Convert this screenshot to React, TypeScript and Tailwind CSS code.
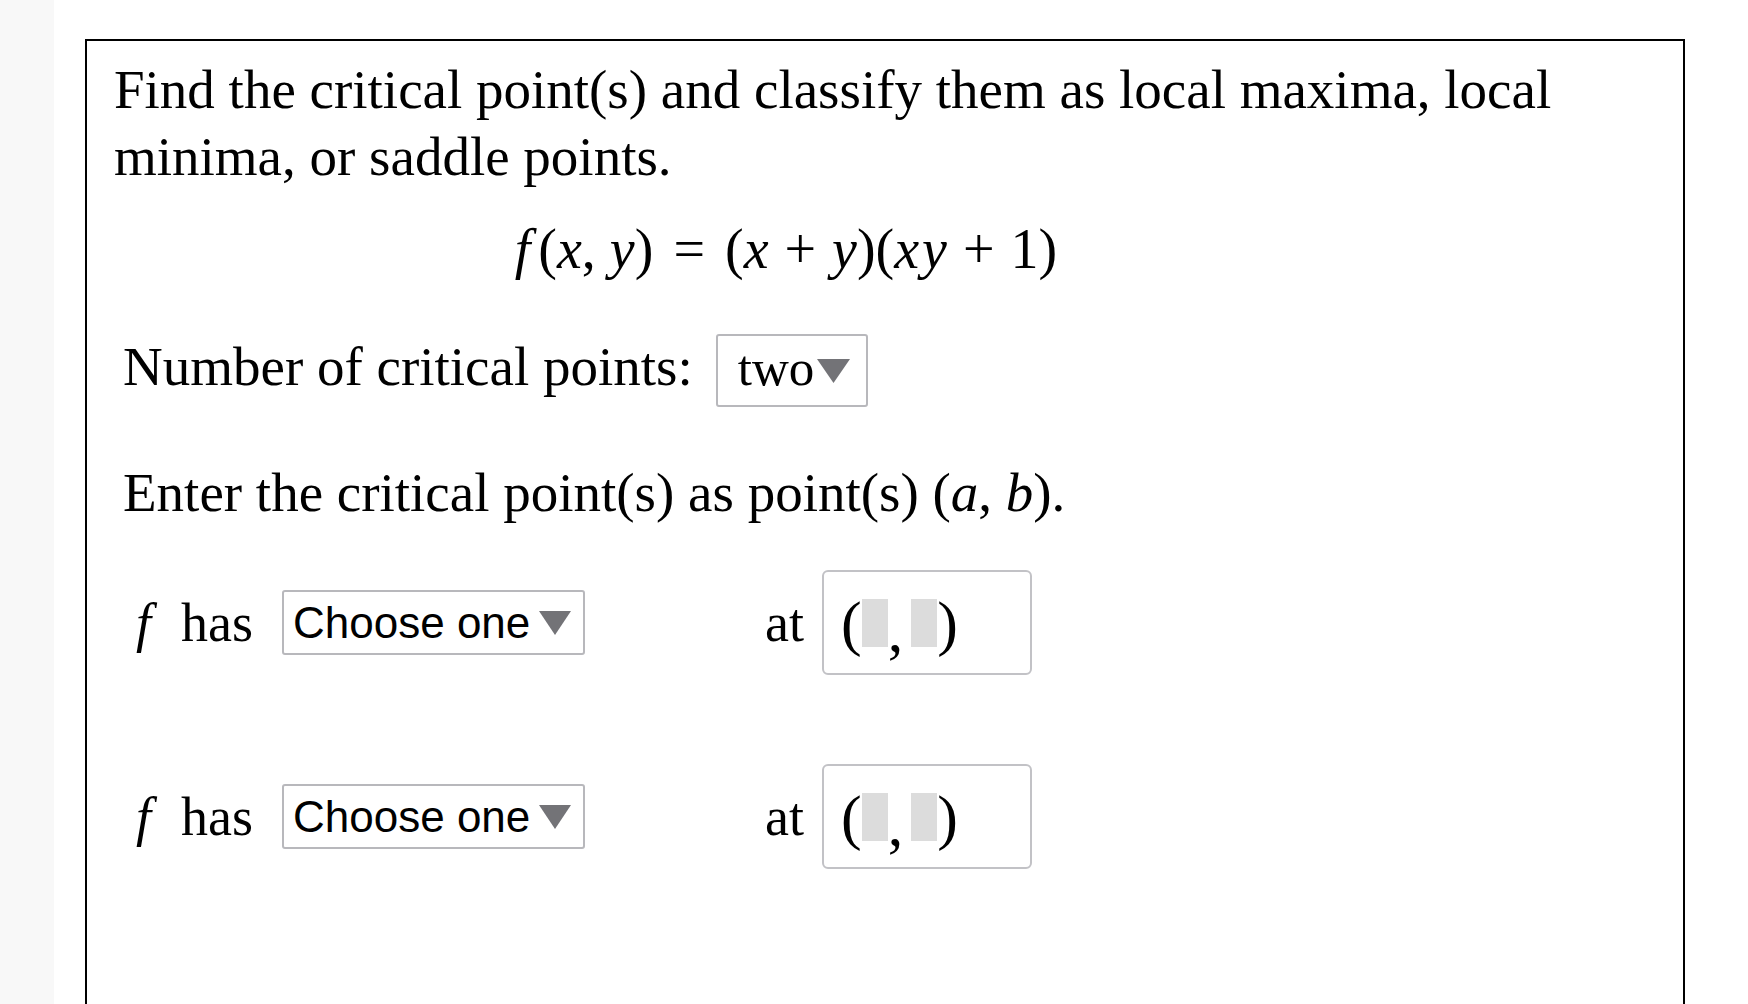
import React from "react";

function Tri({ w, h }: { w: number; h: number }) {
  return (
    <svg width={w} height={h} viewBox={`0 0 ${w} ${h}`} className="shrink-0">
      <path d={`M0 0H${w}L${w / 2} ${h}Z`} fill="#737377" />
    </svg>
  );
}

function PointInput() {
  return (
    <div className="flex h-[105px] w-[210px] items-center rounded-[6px] border-2 border-[#c2c2c6] pl-[17px] font-['Liberation_Serif',serif] text-[62px] leading-none text-black">
      <span>(</span>
      <span className="inline-block h-[48px] w-[26px] bg-[#dcdcdc]" />
      <span className="mr-[8px] self-center pt-[14px]">,</span>
      <span className="inline-block h-[48px] w-[26px] bg-[#dcdcdc]" />
      <span>)</span>
    </div>
  );
}

function ChooseRow({ mt }: { mt: string }) {
  return (
    <div className={`flex h-[105px] items-center pl-[49px] ${mt}`}>
      <span className="font-['Liberation_Serif',serif] text-[54px] italic leading-none">f</span>
      <span className="ml-[30px] font-['Liberation_Serif',serif] text-[54px] leading-none">has</span>
      <div className="ml-[29px] flex h-[65px] w-[303px] items-center rounded-[3px] border-2 border-[#b8b8bc] pl-[9px] font-['Liberation_Sans',Arial,sans-serif] text-[44px] leading-none text-black">
        <span>Choose one</span>
        <span className="ml-[9px]">
          <Tri w={32} h={24} />
        </span>
      </div>
      <span className="ml-[180px] font-['Liberation_Serif',serif] text-[54px] leading-none">at</span>
      <div className="ml-[18px]">
        <PointInput />
      </div>
    </div>
  );
}

export default function App() {
  return (
    <div className="flex h-[1004px] w-[1748px] overflow-hidden bg-white text-black">
      <div className="w-[54px] shrink-0 bg-[#f8f8f8]" />
      <div className="ml-[31px] mt-[39px] h-[1100px] w-[1600px] shrink-0 border-2 border-black font-['Liberation_Serif',serif]">
        <p className="pl-[27px] pr-[40px] pt-[15px] text-[55px] leading-[67px]">
          Find the critical point(s) and classify them as local maxima, local minima, or saddle points.
        </p>
        <div className="mt-[24px] w-[1371px] pl-[27px] text-center text-[56px] leading-[70px]">
          <span className="italic">f</span>
          <span className="ml-[8px]">(</span>
          <span className="italic">x</span>,<span className="ml-[14px] italic">y</span>)
          <span className="mx-[20px]">=</span>(<span className="italic">x</span>
          <span className="mx-[16px]">+</span>
          <span className="italic">y</span>)(<span className="italic">x</span>
          <span className="ml-[3px] italic">y</span>
          <span className="mx-[16px]">+</span>1)
        </div>
        <div className="mt-[49px] flex items-baseline pl-[36px]">
          <span className="text-[55px] leading-[67px]">Number of critical points:</span>
          <div className="ml-[23px] inline-flex h-[73px] items-center rounded-[3px] border-2 border-[#b8b8bc] pb-1 pl-[20px] pr-[16px] text-[51px] leading-none">
            <span>two</span>
            <span className="ml-[3px] pt-1">
              <Tri w={33} h={24} />
            </span>
          </div>
        </div>
        <p className="mt-[52px] pl-[36px] text-[55px] leading-[67px]">
          Enter the critical point(s) as point(s) (<span className="italic">a</span>,{" "}
          <span className="italic">b</span>).
        </p>
        <ChooseRow mt="mt-[44px]" />
        <ChooseRow mt="mt-[89px]" />
      </div>
    </div>
  );
}
